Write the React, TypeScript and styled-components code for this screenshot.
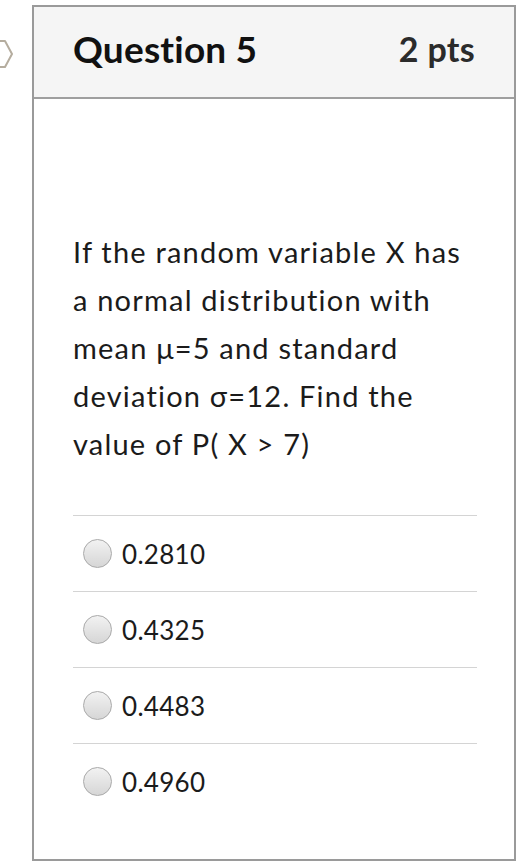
import React from "react";
import styled, { createGlobalStyle } from "styled-components";

const GlobalStyle = createGlobalStyle`
  html, body {
    margin: 0;
    padding: 0;
    background: #ffffff;
    font-family: Lato, "Open Sans", sans-serif;
  }
`;

const options = ["0.2810", "0.4325", "0.4483", "0.4960"];

const App = () => {
  return (
    <>
      <GlobalStyle />
      <Page>
        <Gutter>
          <Marker viewBox="0 0 14 30">
            <polyline points="-2,2 5,2 12,15 5,28 -2,28" />
          </Marker>
        </Gutter>
        <Card>
          <Header>
            <Title>Question 5</Title>
            <Points>2 pts</Points>
          </Header>
          <Body>
            <Prompt>
              If the random variable X has a normal distribution with mean μ=5 and standard
              deviation σ=12. Find the value of P( X &gt; 7)
            </Prompt>
            <Answers>
              {options.map((o) => (
                <Answer key={o}>
                  <Radio />
                  <AnswerText>{o}</AnswerText>
                </Answer>
              ))}
            </Answers>
          </Body>
        </Card>
      </Page>
    </>
  );
};

export default App;

const Page = styled.div`
  display: flex;
  padding-top: 5px;
  width: 524px;
  height: 867px;
  box-sizing: border-box;
`;

const Gutter = styled.div`
  width: 32px;
  flex-shrink: 0;
  padding-top: 34px;
`;

const Marker = styled.svg`
  display: block;
  width: 14px;
  height: 30px;
  fill: none;
  stroke: #b5ad9f;
  stroke-width: 2;
  stroke-linejoin: round;
`;

const Card = styled.div`
  width: 484px;
  height: 856px;
  box-sizing: border-box;
  border: 2px solid #9a9a9a;
  display: flex;
  flex-direction: column;
`;

const Header = styled.div`
  height: 82px;
  flex-shrink: 0;
  background: #f5f5f5;
  border-bottom: 2px solid #9f9f9f;
  display: flex;
  align-items: center;
  justify-content: space-between;
  padding: 0 39px 8px 39px;
  box-sizing: content-box;
`;

const Title = styled.div`
  font-size: 37px;
  font-weight: 700;
  color: #111111;
  letter-spacing: 0.2px;
`;

const Points = styled.div`
  font-size: 34px;
  font-weight: 700;
  color: #2b2b2b;
  letter-spacing: 0.3px;
`;

const Body = styled.div`
  padding: 129px 37px 0 39px;
`;

const Prompt = styled.div`
  width: 395px;
  font-size: 29px;
  line-height: 48px;
  letter-spacing: 1.2px;
  color: #1b1b1b;
`;

const Answers = styled.div`
  margin-top: 47px;
`;

const Answer = styled.div`
  height: 75px;
  border-top: 1.5px solid #d4d4d4;
  display: flex;
  align-items: center;
  gap: 10px;
  padding-left: 10px;
`;

const Radio = styled.span`
  width: 29px;
  height: 29px;
  border-radius: 50%;
  box-sizing: border-box;
  border: 1px solid #a9a9a9;
  background: linear-gradient(#f2f2f2, #d6d6d6);
`;

const AnswerText = styled.span`
  font-size: 26px;
  letter-spacing: 0.3px;
  color: #1b1b1b;
`;
